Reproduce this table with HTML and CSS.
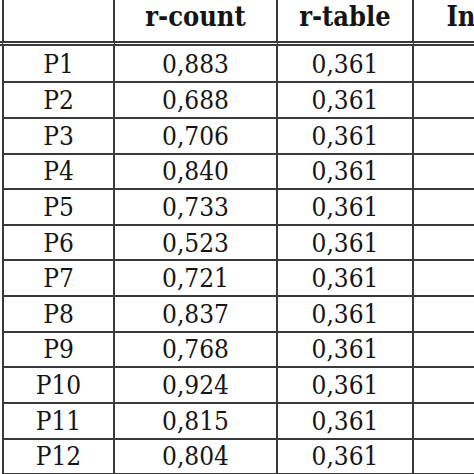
FILE: index.html
```html
<!DOCTYPE html>
<html lang="id">
<head>
<meta charset="utf-8">
<title>Validity table</title>
<link rel="stylesheet" href="styles.css">
</head>
<body>
<table class="validity">
  <thead>
    <tr>
      <th class="edge"></th>
      <th class="c-item"></th>
      <th class="c-count">r-count</th>
      <th class="c-table">r-table</th>
      <th class="c-info">Interpretation</th>
    </tr>
  </thead>
  <tbody>
    <tr><td class="edge"></td><td>P1</td><td>0,883</td><td>0,361</td><td></td></tr>
    <tr><td class="edge"></td><td>P2</td><td>0,688</td><td>0,361</td><td></td></tr>
    <tr><td class="edge"></td><td>P3</td><td>0,706</td><td>0,361</td><td></td></tr>
    <tr><td class="edge"></td><td>P4</td><td>0,840</td><td>0,361</td><td></td></tr>
    <tr><td class="edge"></td><td>P5</td><td>0,733</td><td>0,361</td><td></td></tr>
    <tr><td class="edge"></td><td>P6</td><td>0,523</td><td>0,361</td><td></td></tr>
    <tr><td class="edge"></td><td>P7</td><td>0,721</td><td>0,361</td><td></td></tr>
    <tr><td class="edge"></td><td>P8</td><td>0,837</td><td>0,361</td><td></td></tr>
    <tr><td class="edge"></td><td>P9</td><td>0,768</td><td>0,361</td><td></td></tr>
    <tr><td class="edge"></td><td>P10</td><td>0,924</td><td>0,361</td><td></td></tr>
    <tr><td class="edge"></td><td>P11</td><td>0,815</td><td>0,361</td><td></td></tr>
    <tr><td class="edge"></td><td>P12</td><td>0,804</td><td>0,361</td><td></td></tr>
  </tbody>
</table>
</body>
</html>
```

FILE: styles.css
```css
html, body {
  margin: 0;
  padding: 0;
  overflow: hidden;
  background: #ffffff;
}

.validity {
  border-collapse: separate;
  border-spacing: 0;
  table-layout: fixed;
  width: 676px;
  font-family: "DejaVu Serif Condensed", "DejaVu Serif", serif;
  font-stretch: condensed;
  color: #151515;
}

.validity th,
.validity td {
  box-sizing: border-box;
  padding: 0;
  text-align: center;
  white-space: nowrap;
  overflow: hidden;
  border-right: 2px solid #3a3a3a;
}

.validity th {
  font-size: 27px;
  font-weight: bold;
  line-height: 34px;
  padding-bottom: 7px;
  vertical-align: top;
  border-bottom: 5px double #3a3a3a;
}

.validity td {
  font-size: 26px;
  line-height: 30px;
  height: 35.64px;
  vertical-align: middle;
  border-bottom: 2px solid #3a3a3a;
}

.validity tbody tr:first-child td {
  height: 37.3px;
}

.validity .edge {
  width: 2px;
  border-right: none;
}

.validity td.edge {
  border-bottom: none;
}

.validity .c-item {
  width: 113px;
  border-left: 2px solid #3a3a3a;
}

.validity td:nth-child(2) {
  border-left: 2px solid #3a3a3a;
}

.validity .c-count {
  width: 163px;
}

.validity .c-table {
  width: 136px;
}

.validity .c-info {
  width: 262px;
}
```
